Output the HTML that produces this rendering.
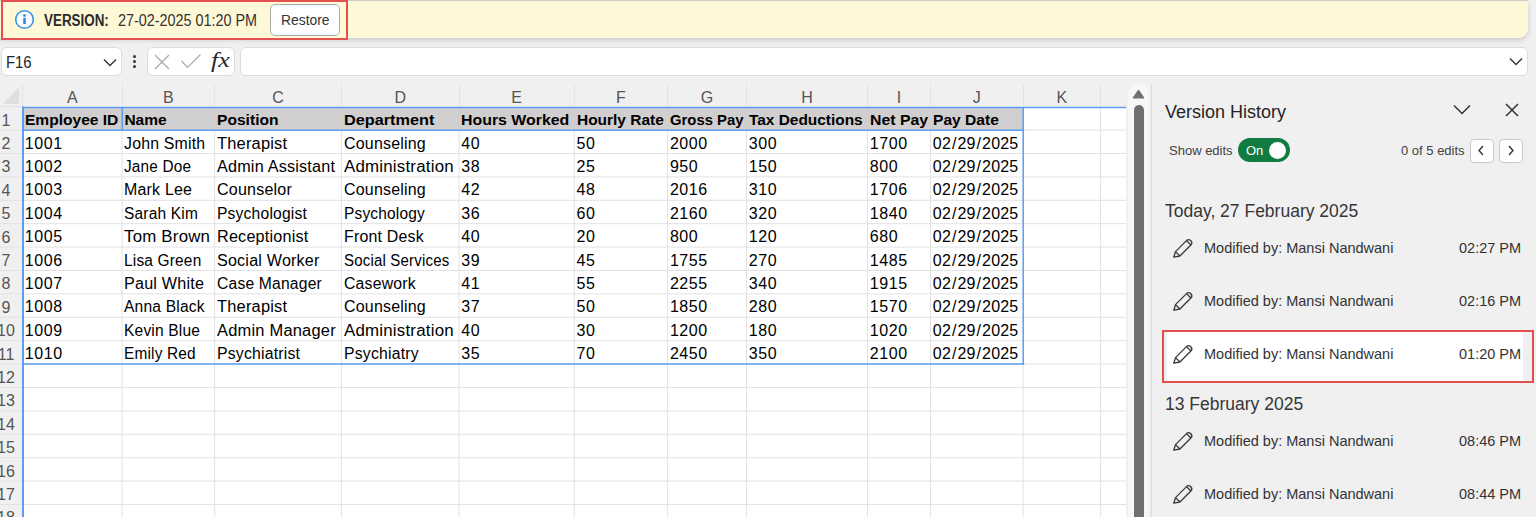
<!DOCTYPE html>
<html><head><meta charset="utf-8"><style>
html,body{margin:0;padding:0;}
body{width:1536px;height:517px;overflow:hidden;position:relative;background:#f0f0f0;font-family:"Liberation Sans",sans-serif;color:#242424;}
.abs{position:absolute;}
.t{position:absolute;white-space:nowrap;}
.cell{position:absolute;white-space:nowrap;font-size:16px;color:#000;line-height:23.4px;letter-spacing:0.2px;}
.hdr{font-weight:bold;font-size:15.5px;letter-spacing:0;}
.colL{position:absolute;top:85.5px;height:23px;line-height:23px;font-size:16px;color:#555;text-align:center;}
.rowN{position:absolute;left:-9px;width:30px;text-align:center;font-size:16px;color:#555;line-height:23px;}
.item .t{font-size:14.5px;color:#333;}
</style></head><body>

<div class="abs" style="left:0px;top:0px;width:1528px;height:1.5px;background:#d2d2d2;"></div>
<div class="abs" style="left:-10px;top:1.3px;width:1538px;height:36.7px;background:#fef8d6;border-radius:0 0 9px 9px;box-shadow:0 2px 5px rgba(0,0,0,0.16);"></div>
<div class="abs" style="left:1px;top:0px;width:343px;height:36px;border:2px solid #e24f4f;"></div>
<svg class="abs" style="left:13.6px;top:8.8px" width="21" height="21" viewBox="0 0 21 21"><circle cx="10.5" cy="10.5" r="8.8" fill="#f8faff" stroke="#3895dc" stroke-width="1.6"/><circle cx="10.5" cy="6.6" r="1.35" fill="#2088d8"/><rect x="9.25" y="8.9" width="2.5" height="6.1" fill="#2088d8"/></svg>
<div class="t" style="left:44px;top:11.6px;font-size:15.6px;font-weight:bold;color:#2b2b2b;line-height:18px;transform:scaleX(0.86);transform-origin:0 0;">VERSION:</div>
<div class="t" style="left:118px;top:12.4px;font-size:15.8px;color:#333;line-height:18px;transform:scaleX(0.91);transform-origin:0 0;">27-02-2025 01:20 PM</div>
<div class="abs" style="left:270px;top:4px;width:68px;height:30px;background:#fff;border:1px solid #aaa;border-radius:5px;box-sizing:border-box;width:70px;height:31.5px;"></div>
<div class="t" style="left:280.5px;top:10.5px;font-size:15.5px;color:#333;line-height:18px;transform:scaleX(0.895);transform-origin:0 0;">Restore</div>
<div class="abs" style="left:1px;top:47px;width:119px;height:27px;background:#fff;border:1px solid #dcdcdc;border-radius:6px;"></div>
<div class="t" style="left:6px;top:52px;font-size:16.5px;color:#242424;line-height:20px;transform:scaleX(0.9);transform-origin:0 0;">F16</div>
<svg class="abs" style="left:103px;top:58px" width="14" height="9" viewBox="0 0 14 9"><path d="M1 1.5 L7 7.5 L13 1.5" fill="none" stroke="#333" stroke-width="1.4"/></svg>
<svg class="abs" style="left:131px;top:53px" width="7" height="16" viewBox="0 0 7 16"><circle cx="3.5" cy="3.5" r="1.5" fill="#333"/><circle cx="3.5" cy="8.5" r="1.5" fill="#333"/><circle cx="3.5" cy="13.5" r="1.5" fill="#333"/></svg>
<div class="abs" style="left:147px;top:47px;width:86px;height:27px;background:#fff;border:1px solid #dcdcdc;border-radius:6px;"></div>
<svg class="abs" style="left:154px;top:54px" width="16" height="16" viewBox="0 0 16 16"><path d="M1 1 L15 15 M15 1 L1 15" fill="none" stroke="#a8a8a8" stroke-width="1.2"/></svg>
<svg class="abs" style="left:181px;top:54px" width="21" height="15" viewBox="0 0 21 15"><path d="M0.5 7 L6.5 13.5 L19.5 0.5" fill="none" stroke="#a8a8a8" stroke-width="1.2"/></svg>
<div class="t" style="left:210.5px;top:47.5px;font-family:'Liberation Serif',serif;font-style:italic;font-size:22px;color:#2a2a2a;line-height:24px;transform:scaleX(1.18);transform-origin:0 0;">fx</div>
<div class="abs" style="left:240px;top:47px;width:1286px;height:27px;background:#fff;border:1px solid #dcdcdc;border-radius:6px;"></div>
<svg class="abs" style="left:1509px;top:57px" width="14" height="9" viewBox="0 0 14 9"><path d="M1 1.5 L7 7.5 L13 1.5" fill="none" stroke="#333" stroke-width="1.4"/></svg>
<svg class="abs" style="left:2px;top:86px" width="18" height="19" viewBox="0 0 18 19"><path d="M17 1 L17 18 L1 18 Z" fill="#dfdfdf"/></svg>
<div class="abs" style="left:21.5px;top:84px;width:1px;height:23px;background:#e2e2e2;"></div>
<div class="abs" style="left:0px;top:106px;width:22px;height:1px;background:#e2e2e2;"></div>
<div class="abs" style="left:121.6px;top:84px;width:1px;height:23px;background:#e4e4e4;"></div>
<div class="abs" style="left:214.2px;top:84px;width:1px;height:23px;background:#e4e4e4;"></div>
<div class="abs" style="left:340.9px;top:84px;width:1px;height:23px;background:#e4e4e4;"></div>
<div class="abs" style="left:458.5px;top:84px;width:1px;height:23px;background:#e4e4e4;"></div>
<div class="abs" style="left:573.8px;top:84px;width:1px;height:23px;background:#e4e4e4;"></div>
<div class="abs" style="left:667.1px;top:84px;width:1px;height:23px;background:#e4e4e4;"></div>
<div class="abs" style="left:746.0px;top:84px;width:1px;height:23px;background:#e4e4e4;"></div>
<div class="abs" style="left:867.0px;top:84px;width:1px;height:23px;background:#e4e4e4;"></div>
<div class="abs" style="left:930.0px;top:84px;width:1px;height:23px;background:#e4e4e4;"></div>
<div class="abs" style="left:1022.6px;top:84px;width:1px;height:23px;background:#e4e4e4;"></div>
<div class="abs" style="left:1100.1px;top:84px;width:1px;height:23px;background:#e4e4e4;"></div>
<div class="colL" style="left:22.5px;width:99.6px;">A</div>
<div class="colL" style="left:122.1px;width:92.6px;">B</div>
<div class="colL" style="left:214.7px;width:126.7px;">C</div>
<div class="colL" style="left:341.4px;width:117.6px;">D</div>
<div class="colL" style="left:459.0px;width:115.3px;">E</div>
<div class="colL" style="left:574.3px;width:93.3px;">F</div>
<div class="colL" style="left:667.6px;width:78.9px;">G</div>
<div class="colL" style="left:746.5px;width:121.0px;">H</div>
<div class="colL" style="left:867.5px;width:63.0px;">I</div>
<div class="colL" style="left:930.5px;width:92.6px;">J</div>
<div class="colL" style="left:1023.1px;width:77.5px;">K</div>
<div class="abs" style="left:22px;top:106.7px;width:1104px;height:410.3px;background:#fff;"></div>
<svg class="abs" style="left:0;top:0" width="1126" height="517" viewBox="0 0 1126 517"><line x1="0" y1="130.10" x2="1126" y2="130.10" stroke="#e2e2e2" stroke-width="1"/><line x1="0" y1="153.50" x2="1126" y2="153.50" stroke="#e2e2e2" stroke-width="1"/><line x1="0" y1="176.90" x2="1126" y2="176.90" stroke="#e2e2e2" stroke-width="1"/><line x1="0" y1="200.30" x2="1126" y2="200.30" stroke="#e2e2e2" stroke-width="1"/><line x1="0" y1="223.70" x2="1126" y2="223.70" stroke="#e2e2e2" stroke-width="1"/><line x1="0" y1="247.10" x2="1126" y2="247.10" stroke="#e2e2e2" stroke-width="1"/><line x1="0" y1="270.50" x2="1126" y2="270.50" stroke="#e2e2e2" stroke-width="1"/><line x1="0" y1="293.90" x2="1126" y2="293.90" stroke="#e2e2e2" stroke-width="1"/><line x1="0" y1="317.30" x2="1126" y2="317.30" stroke="#e2e2e2" stroke-width="1"/><line x1="0" y1="340.70" x2="1126" y2="340.70" stroke="#e2e2e2" stroke-width="1"/><line x1="0" y1="364.10" x2="1126" y2="364.10" stroke="#e2e2e2" stroke-width="1"/><line x1="0" y1="387.50" x2="1126" y2="387.50" stroke="#e2e2e2" stroke-width="1"/><line x1="0" y1="410.90" x2="1126" y2="410.90" stroke="#e2e2e2" stroke-width="1"/><line x1="0" y1="434.30" x2="1126" y2="434.30" stroke="#e2e2e2" stroke-width="1"/><line x1="0" y1="457.70" x2="1126" y2="457.70" stroke="#e2e2e2" stroke-width="1"/><line x1="0" y1="481.10" x2="1126" y2="481.10" stroke="#e2e2e2" stroke-width="1"/><line x1="0" y1="504.50" x2="1126" y2="504.50" stroke="#e2e2e2" stroke-width="1"/><line x1="0" y1="527.90" x2="1126" y2="527.90" stroke="#e2e2e2" stroke-width="1"/><line x1="122.10" y1="106.70" x2="122.10" y2="517" stroke="#e2e2e2" stroke-width="1"/><line x1="214.70" y1="106.70" x2="214.70" y2="517" stroke="#e2e2e2" stroke-width="1"/><line x1="341.40" y1="106.70" x2="341.40" y2="517" stroke="#e2e2e2" stroke-width="1"/><line x1="459.00" y1="106.70" x2="459.00" y2="517" stroke="#e2e2e2" stroke-width="1"/><line x1="574.30" y1="106.70" x2="574.30" y2="517" stroke="#e2e2e2" stroke-width="1"/><line x1="667.60" y1="106.70" x2="667.60" y2="517" stroke="#e2e2e2" stroke-width="1"/><line x1="746.50" y1="106.70" x2="746.50" y2="517" stroke="#e2e2e2" stroke-width="1"/><line x1="867.50" y1="106.70" x2="867.50" y2="517" stroke="#e2e2e2" stroke-width="1"/><line x1="930.50" y1="106.70" x2="930.50" y2="517" stroke="#e2e2e2" stroke-width="1"/><line x1="1023.10" y1="106.70" x2="1023.10" y2="517" stroke="#e2e2e2" stroke-width="1"/><line x1="1100.60" y1="106.70" x2="1100.60" y2="517" stroke="#e2e2e2" stroke-width="1"/></svg>
<div class="abs" style="left:22px;top:106.7px;width:1001px;height:23.40px;background:#d0cece;"></div>
<div class="rowN" style="top:108.60px;">1</div>
<div class="rowN" style="top:132.00px;">2</div>
<div class="rowN" style="top:155.40px;">3</div>
<div class="rowN" style="top:178.80px;">4</div>
<div class="rowN" style="top:202.20px;">5</div>
<div class="rowN" style="top:225.60px;">6</div>
<div class="rowN" style="top:249.00px;">7</div>
<div class="rowN" style="top:272.40px;">8</div>
<div class="rowN" style="top:295.80px;">9</div>
<div class="rowN" style="top:319.20px;">10</div>
<div class="rowN" style="top:342.60px;">11</div>
<div class="rowN" style="top:366.00px;">12</div>
<div class="rowN" style="top:389.40px;">13</div>
<div class="rowN" style="top:412.80px;">14</div>
<div class="rowN" style="top:436.20px;">15</div>
<div class="rowN" style="top:459.60px;">16</div>
<div class="rowN" style="top:483.00px;">17</div>
<div class="rowN" style="top:506.40px;">18</div>
<div class="cell hdr" style="left:24.8px;top:107.70px;transform:scaleX(1.0033);transform-origin:0 0;">Employee ID</div>
<div class="cell hdr" style="left:124.4px;top:107.70px;">Name</div>
<div class="cell hdr" style="left:217.0px;top:107.70px;transform:scaleX(1.0067);transform-origin:0 0;">Position</div>
<div class="cell hdr" style="left:343.7px;top:107.70px;transform:scaleX(1.0498);transform-origin:0 0;">Department</div>
<div class="cell hdr" style="left:461.3px;top:107.70px;transform:scaleX(1.0248);transform-origin:0 0;">Hours Worked</div>
<div class="cell hdr" style="left:576.6px;top:107.70px;transform:scaleX(0.9977);transform-origin:0 0;">Hourly Rate</div>
<div class="cell hdr" style="left:669.9px;top:107.70px;transform:scaleX(0.9593);transform-origin:0 0;">Gross Pay</div>
<div class="cell hdr" style="left:748.8px;top:107.70px;transform:scaleX(0.9947);transform-origin:0 0;">Tax Deductions</div>
<div class="cell hdr" style="left:869.8px;top:107.70px;transform:scaleX(1.0214);transform-origin:0 0;">Net Pay</div>
<div class="cell hdr" style="left:932.8px;top:107.70px;transform:scaleX(1.0061);transform-origin:0 0;">Pay Date</div>
<div class="cell" style="left:24.8px;top:131.60px;letter-spacing:0.55px;">1001</div>
<div class="cell" style="left:124.4px;top:131.60px;transform:scaleX(0.9913);transform-origin:0 0;">John Smith</div>
<div class="cell" style="left:217.0px;top:131.60px;transform:scaleX(1.0265);transform-origin:0 0;">Therapist</div>
<div class="cell" style="left:343.7px;top:131.60px;transform:scaleX(0.9988);transform-origin:0 0;">Counseling</div>
<div class="cell" style="left:461.3px;top:131.60px;letter-spacing:0.55px;">40</div>
<div class="cell" style="left:576.6px;top:131.60px;letter-spacing:0.55px;">50</div>
<div class="cell" style="left:669.9px;top:131.60px;letter-spacing:0.55px;">2000</div>
<div class="cell" style="left:748.8px;top:131.60px;letter-spacing:0.55px;">300</div>
<div class="cell" style="left:869.8px;top:131.60px;letter-spacing:0.55px;">1700</div>
<div class="cell" style="left:932.8px;top:131.60px;">02<span style="margin:0 0.9px">/</span>29<span style="margin:0 0.9px">/</span>2025</div>
<div class="cell" style="left:24.8px;top:155.00px;letter-spacing:0.55px;">1002</div>
<div class="cell" style="left:124.4px;top:155.00px;transform:scaleX(0.9583);transform-origin:0 0;">Jane Doe</div>
<div class="cell" style="left:217.0px;top:155.00px;transform:scaleX(1.0111);transform-origin:0 0;">Admin Assistant</div>
<div class="cell" style="left:343.7px;top:155.00px;transform:scaleX(1.0542);transform-origin:0 0;">Administration</div>
<div class="cell" style="left:461.3px;top:155.00px;letter-spacing:0.55px;">38</div>
<div class="cell" style="left:576.6px;top:155.00px;letter-spacing:0.55px;">25</div>
<div class="cell" style="left:669.9px;top:155.00px;letter-spacing:0.55px;">950</div>
<div class="cell" style="left:748.8px;top:155.00px;letter-spacing:0.55px;">150</div>
<div class="cell" style="left:869.8px;top:155.00px;letter-spacing:0.55px;">800</div>
<div class="cell" style="left:932.8px;top:155.00px;">02<span style="margin:0 0.9px">/</span>29<span style="margin:0 0.9px">/</span>2025</div>
<div class="cell" style="left:24.8px;top:178.40px;letter-spacing:0.55px;">1003</div>
<div class="cell" style="left:124.4px;top:178.40px;transform:scaleX(0.9970);transform-origin:0 0;">Mark Lee</div>
<div class="cell" style="left:217.0px;top:178.40px;transform:scaleX(1.0041);transform-origin:0 0;">Counselor</div>
<div class="cell" style="left:343.7px;top:178.40px;transform:scaleX(0.9988);transform-origin:0 0;">Counseling</div>
<div class="cell" style="left:461.3px;top:178.40px;letter-spacing:0.55px;">42</div>
<div class="cell" style="left:576.6px;top:178.40px;letter-spacing:0.55px;">48</div>
<div class="cell" style="left:669.9px;top:178.40px;letter-spacing:0.55px;">2016</div>
<div class="cell" style="left:748.8px;top:178.40px;letter-spacing:0.55px;">310</div>
<div class="cell" style="left:869.8px;top:178.40px;letter-spacing:0.55px;">1706</div>
<div class="cell" style="left:932.8px;top:178.40px;">02<span style="margin:0 0.9px">/</span>29<span style="margin:0 0.9px">/</span>2025</div>
<div class="cell" style="left:24.8px;top:201.80px;letter-spacing:0.55px;">1004</div>
<div class="cell" style="left:124.4px;top:201.80px;transform:scaleX(0.9669);transform-origin:0 0;">Sarah Kim</div>
<div class="cell" style="left:217.0px;top:201.80px;transform:scaleX(0.9761);transform-origin:0 0;">Psychologist</div>
<div class="cell" style="left:343.7px;top:201.80px;transform:scaleX(0.9664);transform-origin:0 0;">Psychology</div>
<div class="cell" style="left:461.3px;top:201.80px;letter-spacing:0.55px;">36</div>
<div class="cell" style="left:576.6px;top:201.80px;letter-spacing:0.55px;">60</div>
<div class="cell" style="left:669.9px;top:201.80px;letter-spacing:0.55px;">2160</div>
<div class="cell" style="left:748.8px;top:201.80px;letter-spacing:0.55px;">320</div>
<div class="cell" style="left:869.8px;top:201.80px;letter-spacing:0.55px;">1840</div>
<div class="cell" style="left:932.8px;top:201.80px;">02<span style="margin:0 0.9px">/</span>29<span style="margin:0 0.9px">/</span>2025</div>
<div class="cell" style="left:24.8px;top:225.20px;letter-spacing:0.55px;">1005</div>
<div class="cell" style="left:124.4px;top:225.20px;transform:scaleX(1.0533);transform-origin:0 0;">Tom Brown</div>
<div class="cell" style="left:217.0px;top:225.20px;transform:scaleX(1.0111);transform-origin:0 0;">Receptionist</div>
<div class="cell" style="left:343.7px;top:225.20px;transform:scaleX(0.9950);transform-origin:0 0;">Front Desk</div>
<div class="cell" style="left:461.3px;top:225.20px;letter-spacing:0.55px;">40</div>
<div class="cell" style="left:576.6px;top:225.20px;letter-spacing:0.55px;">20</div>
<div class="cell" style="left:669.9px;top:225.20px;letter-spacing:0.55px;">800</div>
<div class="cell" style="left:748.8px;top:225.20px;letter-spacing:0.55px;">120</div>
<div class="cell" style="left:869.8px;top:225.20px;letter-spacing:0.55px;">680</div>
<div class="cell" style="left:932.8px;top:225.20px;">02<span style="margin:0 0.9px">/</span>29<span style="margin:0 0.9px">/</span>2025</div>
<div class="cell" style="left:24.8px;top:248.60px;letter-spacing:0.55px;">1006</div>
<div class="cell" style="left:124.4px;top:248.60px;transform:scaleX(0.9644);transform-origin:0 0;">Lisa Green</div>
<div class="cell" style="left:217.0px;top:248.60px;transform:scaleX(1.0069);transform-origin:0 0;">Social Worker</div>
<div class="cell" style="left:343.7px;top:248.60px;transform:scaleX(0.9380);transform-origin:0 0;">Social Services</div>
<div class="cell" style="left:461.3px;top:248.60px;letter-spacing:0.55px;">39</div>
<div class="cell" style="left:576.6px;top:248.60px;letter-spacing:0.55px;">45</div>
<div class="cell" style="left:669.9px;top:248.60px;letter-spacing:0.55px;">1755</div>
<div class="cell" style="left:748.8px;top:248.60px;letter-spacing:0.55px;">270</div>
<div class="cell" style="left:869.8px;top:248.60px;letter-spacing:0.55px;">1485</div>
<div class="cell" style="left:932.8px;top:248.60px;">02<span style="margin:0 0.9px">/</span>29<span style="margin:0 0.9px">/</span>2025</div>
<div class="cell" style="left:24.8px;top:272.00px;letter-spacing:0.55px;">1007</div>
<div class="cell" style="left:124.4px;top:272.00px;transform:scaleX(1.0102);transform-origin:0 0;">Paul White</div>
<div class="cell" style="left:217.0px;top:272.00px;transform:scaleX(0.9776);transform-origin:0 0;">Case Manager</div>
<div class="cell" style="left:343.7px;top:272.00px;transform:scaleX(0.9862);transform-origin:0 0;">Casework</div>
<div class="cell" style="left:461.3px;top:272.00px;letter-spacing:0.55px;">41</div>
<div class="cell" style="left:576.6px;top:272.00px;letter-spacing:0.55px;">55</div>
<div class="cell" style="left:669.9px;top:272.00px;letter-spacing:0.55px;">2255</div>
<div class="cell" style="left:748.8px;top:272.00px;letter-spacing:0.55px;">340</div>
<div class="cell" style="left:869.8px;top:272.00px;letter-spacing:0.55px;">1915</div>
<div class="cell" style="left:932.8px;top:272.00px;">02<span style="margin:0 0.9px">/</span>29<span style="margin:0 0.9px">/</span>2025</div>
<div class="cell" style="left:24.8px;top:295.40px;letter-spacing:0.55px;">1008</div>
<div class="cell" style="left:124.4px;top:295.40px;transform:scaleX(0.9734);transform-origin:0 0;">Anna Black</div>
<div class="cell" style="left:217.0px;top:295.40px;transform:scaleX(1.0265);transform-origin:0 0;">Therapist</div>
<div class="cell" style="left:343.7px;top:295.40px;transform:scaleX(0.9988);transform-origin:0 0;">Counseling</div>
<div class="cell" style="left:461.3px;top:295.40px;letter-spacing:0.55px;">37</div>
<div class="cell" style="left:576.6px;top:295.40px;letter-spacing:0.55px;">50</div>
<div class="cell" style="left:669.9px;top:295.40px;letter-spacing:0.55px;">1850</div>
<div class="cell" style="left:748.8px;top:295.40px;letter-spacing:0.55px;">280</div>
<div class="cell" style="left:869.8px;top:295.40px;letter-spacing:0.55px;">1570</div>
<div class="cell" style="left:932.8px;top:295.40px;">02<span style="margin:0 0.9px">/</span>29<span style="margin:0 0.9px">/</span>2025</div>
<div class="cell" style="left:24.8px;top:318.80px;letter-spacing:0.55px;">1009</div>
<div class="cell" style="left:124.4px;top:318.80px;transform:scaleX(0.9704);transform-origin:0 0;">Kevin Blue</div>
<div class="cell" style="left:217.0px;top:318.80px;transform:scaleX(1.0287);transform-origin:0 0;">Admin Manager</div>
<div class="cell" style="left:343.7px;top:318.80px;transform:scaleX(1.0542);transform-origin:0 0;">Administration</div>
<div class="cell" style="left:461.3px;top:318.80px;letter-spacing:0.55px;">40</div>
<div class="cell" style="left:576.6px;top:318.80px;letter-spacing:0.55px;">30</div>
<div class="cell" style="left:669.9px;top:318.80px;letter-spacing:0.55px;">1200</div>
<div class="cell" style="left:748.8px;top:318.80px;letter-spacing:0.55px;">180</div>
<div class="cell" style="left:869.8px;top:318.80px;letter-spacing:0.55px;">1020</div>
<div class="cell" style="left:932.8px;top:318.80px;">02<span style="margin:0 0.9px">/</span>29<span style="margin:0 0.9px">/</span>2025</div>
<div class="cell" style="left:24.8px;top:342.20px;letter-spacing:0.55px;">1010</div>
<div class="cell" style="left:124.4px;top:342.20px;transform:scaleX(0.9620);transform-origin:0 0;">Emily Red</div>
<div class="cell" style="left:217.0px;top:342.20px;transform:scaleX(0.9881);transform-origin:0 0;">Psychiatrist</div>
<div class="cell" style="left:343.7px;top:342.20px;transform:scaleX(0.9867);transform-origin:0 0;">Psychiatry</div>
<div class="cell" style="left:461.3px;top:342.20px;letter-spacing:0.55px;">35</div>
<div class="cell" style="left:576.6px;top:342.20px;letter-spacing:0.55px;">70</div>
<div class="cell" style="left:669.9px;top:342.20px;letter-spacing:0.55px;">2450</div>
<div class="cell" style="left:748.8px;top:342.20px;letter-spacing:0.55px;">350</div>
<div class="cell" style="left:869.8px;top:342.20px;letter-spacing:0.55px;">2100</div>
<div class="cell" style="left:932.8px;top:342.20px;">02<span style="margin:0 0.9px">/</span>29<span style="margin:0 0.9px">/</span>2025</div>
<svg class="abs" style="left:0;top:0" width="1126" height="517" viewBox="0 0 1126 517"><line x1="22.0" y1="107.6" x2="1126" y2="107.6" stroke="#5b9df2" stroke-width="1.5"/><line x1="23.0" y1="106.6" x2="23.0" y2="517" stroke="#5b9df2" stroke-width="2"/><line x1="23.0" y1="130.3" x2="1024.2" y2="130.3" stroke="#5b9df2" stroke-width="1.5"/><line x1="23.0" y1="364.0" x2="1024.2" y2="364.0" stroke="#5b9df2" stroke-width="1.5"/><line x1="1023.2" y1="107.6" x2="1023.2" y2="364.9" stroke="#5b9df2" stroke-width="1.5"/><line x1="122.2" y1="107.6" x2="122.2" y2="130.3" stroke="#5b9df2" stroke-width="1.5"/></svg>
<div class="abs" style="left:1128px;top:84px;width:21px;height:460px;background:#f7f7f7;border-radius:10px;"></div>
<svg class="abs" style="left:1132px;top:89px" width="13" height="10" viewBox="0 0 13 10"><path d="M6.5 1 L12 9 L1 9 Z" fill="#707070" stroke="#707070" stroke-width="1" stroke-linejoin="round"/></svg>
<div class="abs" style="left:1134px;top:105px;width:10px;height:430px;background:#707070;border-radius:5px;"></div>
<div class="abs" style="left:1151px;top:84px;width:1px;height:433px;background:#dadada;"></div>
<div class="t" style="left:1165px;top:100.7px;font-size:18px;color:#242424;line-height:22px;">Version History</div>
<svg class="abs" style="left:1453px;top:104px" width="18" height="11" viewBox="0 0 18 11"><path d="M1 1.5 L9 9.5 L17 1.5" fill="none" stroke="#333" stroke-width="1.5"/></svg>
<svg class="abs" style="left:1505px;top:103px" width="14" height="14" viewBox="0 0 14 14"><path d="M1 1 L13 13 M13 1 L1 13" fill="none" stroke="#333" stroke-width="1.5"/></svg>
<div class="t" style="left:1169px;top:143px;font-size:13px;color:#424242;line-height:16px;">Show edits</div>
<div class="abs" style="left:1238px;top:138px;width:52px;height:24px;background:#107c41;border-radius:12px;"></div>
<div class="abs" style="left:1269px;top:141.5px;width:17px;height:17px;background:#fff;border-radius:50%;"></div>
<div class="t" style="left:1246px;top:143px;font-size:13px;color:#fff;line-height:16px;">On</div>
<div class="t" style="left:1401px;top:143.3px;font-size:13px;color:#424242;line-height:16px;">0 of 5 edits</div>
<div class="abs" style="left:1470px;top:139px;width:22px;height:22px;background:#fff;border:1px solid #c8c8c8;border-radius:4px;"></div>
<div class="abs" style="left:1499px;top:139px;width:22px;height:22px;background:#fff;border:1px solid #c8c8c8;border-radius:4px;"></div>
<svg class="abs" style="left:1477px;top:145px" width="8" height="11" viewBox="0 0 8 11"><path d="M6 1 L2 5.5 L6 10" fill="none" stroke="#333" stroke-width="1.4"/></svg>
<svg class="abs" style="left:1507px;top:145px" width="8" height="11" viewBox="0 0 8 11"><path d="M2 1 L6 5.5 L2 10" fill="none" stroke="#333" stroke-width="1.4"/></svg>
<div class="t" style="left:1165px;top:201.3px;font-size:17.5px;color:#363636;line-height:21px;">Today, 27 February 2025</div>
<div class="t" style="left:1165px;top:394.4px;font-size:17.5px;color:#363636;line-height:21px;">13 February 2025</div>
<svg class="abs" style="left:1168px;top:234.0px" width="30" height="30" viewBox="0 0 30 30"><path d="M5.8 23.2 L7.51 17.61 L18.51 6.61 A3.1 3.1 0 0 1 22.89 10.99 L11.89 21.99 Z M7.51 17.61 L11.89 21.99 M18.51 6.61 L22.89 10.99" fill="none" stroke="#3a3a3a" stroke-width="1.35" stroke-linejoin="round"/></svg>
<div class="t" style="left:1204px;top:240.0px;font-size:14.5px;color:#333;line-height:17px;">Modified by: Mansi Nandwani</div>
<div class="t" style="left:1459px;top:240.0px;font-size:14.5px;color:#333;line-height:17px;">02:27 PM</div>
<svg class="abs" style="left:1168px;top:287.1px" width="30" height="30" viewBox="0 0 30 30"><path d="M5.8 23.2 L7.51 17.61 L18.51 6.61 A3.1 3.1 0 0 1 22.89 10.99 L11.89 21.99 Z M7.51 17.61 L11.89 21.99 M18.51 6.61 L22.89 10.99" fill="none" stroke="#3a3a3a" stroke-width="1.35" stroke-linejoin="round"/></svg>
<div class="t" style="left:1204px;top:293.1px;font-size:14.5px;color:#333;line-height:17px;">Modified by: Mansi Nandwani</div>
<div class="t" style="left:1459px;top:293.1px;font-size:14.5px;color:#333;line-height:17px;">02:16 PM</div>
<div class="abs" style="left:1167px;top:331.0px;width:356px;height:50.5px;background:#fff;"></div>
<div class="abs" style="left:1162px;top:329.5px;width:367.5px;height:49.5px;border:2px solid #e24f4f;"></div>
<svg class="abs" style="left:1168px;top:340.1px" width="30" height="30" viewBox="0 0 30 30"><path d="M5.8 23.2 L7.51 17.61 L18.51 6.61 A3.1 3.1 0 0 1 22.89 10.99 L11.89 21.99 Z M7.51 17.61 L11.89 21.99 M18.51 6.61 L22.89 10.99" fill="none" stroke="#3a3a3a" stroke-width="1.35" stroke-linejoin="round"/></svg>
<div class="t" style="left:1204px;top:346.1px;font-size:14.5px;color:#333;line-height:17px;">Modified by: Mansi Nandwani</div>
<div class="t" style="left:1459px;top:346.1px;font-size:14.5px;color:#333;line-height:17px;">01:20 PM</div>
<svg class="abs" style="left:1168px;top:427.1px" width="30" height="30" viewBox="0 0 30 30"><path d="M5.8 23.2 L7.51 17.61 L18.51 6.61 A3.1 3.1 0 0 1 22.89 10.99 L11.89 21.99 Z M7.51 17.61 L11.89 21.99 M18.51 6.61 L22.89 10.99" fill="none" stroke="#3a3a3a" stroke-width="1.35" stroke-linejoin="round"/></svg>
<div class="t" style="left:1204px;top:433.1px;font-size:14.5px;color:#333;line-height:17px;">Modified by: Mansi Nandwani</div>
<div class="t" style="left:1459px;top:433.1px;font-size:14.5px;color:#333;line-height:17px;">08:46 PM</div>
<svg class="abs" style="left:1168px;top:480.4px" width="30" height="30" viewBox="0 0 30 30"><path d="M5.8 23.2 L7.51 17.61 L18.51 6.61 A3.1 3.1 0 0 1 22.89 10.99 L11.89 21.99 Z M7.51 17.61 L11.89 21.99 M18.51 6.61 L22.89 10.99" fill="none" stroke="#3a3a3a" stroke-width="1.35" stroke-linejoin="round"/></svg>
<div class="t" style="left:1204px;top:486.4px;font-size:14.5px;color:#333;line-height:17px;">Modified by: Mansi Nandwani</div>
<div class="t" style="left:1459px;top:486.4px;font-size:14.5px;color:#333;line-height:17px;">08:44 PM</div>
</body></html>
